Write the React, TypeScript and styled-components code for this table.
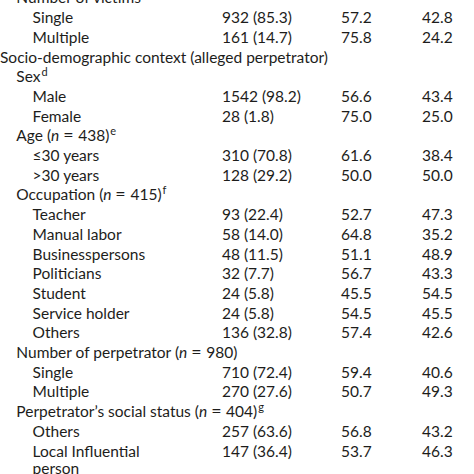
import React from 'react';
import styled, { createGlobalStyle } from 'styled-components';

const GlobalStyle = createGlobalStyle`
  html, body {
    margin: 0;
    padding: 0;
    background: #fff;
  }
  body {
    overflow: hidden;
    font-family: Lato, 'Open Sans', sans-serif;
  }
`;

const Page = styled.div`
  width: 474px;
  height: 474px;
  overflow: hidden;
  background: #fff;
`;

const Table = styled.table`
  margin-top: -11.6px;
  width: 474px;
  table-layout: fixed;
  border-collapse: collapse;
  color: #1d1d1b;
  font-size: 15.5px;
  line-height: 17.7px;
`;

const Label = styled.td<{ $level: number }>`
  padding: 1px 40px 1px ${p => p.$level * 16.3}px;
  vertical-align: top;
  white-space: normal;
`;

const Heading = styled.td<{ $level: number }>`
  padding: 1px 0 1px ${p => p.$level * 16.3}px;
  white-space: nowrap;
`;

const Num = styled.td`
  padding: 1px 0;
  vertical-align: top;
  white-space: nowrap;
`;

const Sup = styled.sup`
  font-size: 11px;
  line-height: 0;
  vertical-align: 6px;
  margin-left: 1px;
`;

const Eq = styled.span`
  display: inline-block;
  margin: 0 1px;
  transform: scaleX(1.15);
`;

type Row =
  | { kind: 'head'; level: number; text: React.ReactNode }
  | { kind: 'data'; level: number; text: string; n: string; a: string; b: string };

const Count = ({ v }: { v: number }) => (
  <>
    (<i>n</i> <Eq>=</Eq> {v})
  </>
);

const rows: Row[] = [
  { kind: 'head', level: 1, text: 'Number of victims' },
  { kind: 'data', level: 2, text: 'Single', n: '932 (85.3)', a: '57.2', b: '42.8' },
  { kind: 'data', level: 2, text: 'Multiple', n: '161 (14.7)', a: '75.8', b: '24.2' },
  { kind: 'head', level: 0, text: 'Socio-demographic context (alleged perpetrator)' },
  { kind: 'head', level: 1, text: <>Sex<Sup>d</Sup></> },
  { kind: 'data', level: 2, text: 'Male', n: '1542 (98.2)', a: '56.6', b: '43.4' },
  { kind: 'data', level: 2, text: 'Female', n: '28 (1.8)', a: '75.0', b: '25.0' },
  { kind: 'head', level: 1, text: <>Age <Count v={438} /><Sup>e</Sup></> },
  { kind: 'data', level: 2, text: '≤30 years', n: '310 (70.8)', a: '61.6', b: '38.4' },
  { kind: 'data', level: 2, text: '>30 years', n: '128 (29.2)', a: '50.0', b: '50.0' },
  { kind: 'head', level: 1, text: <>Occupation <Count v={415} /><Sup>f</Sup></> },
  { kind: 'data', level: 2, text: 'Teacher', n: '93 (22.4)', a: '52.7', b: '47.3' },
  { kind: 'data', level: 2, text: 'Manual labor', n: '58 (14.0)', a: '64.8', b: '35.2' },
  { kind: 'data', level: 2, text: 'Businesspersons', n: '48 (11.5)', a: '51.1', b: '48.9' },
  { kind: 'data', level: 2, text: 'Politicians', n: '32 (7.7)', a: '56.7', b: '43.3' },
  { kind: 'data', level: 2, text: 'Student', n: '24 (5.8)', a: '45.5', b: '54.5' },
  { kind: 'data', level: 2, text: 'Service holder', n: '24 (5.8)', a: '54.5', b: '45.5' },
  { kind: 'data', level: 2, text: 'Others', n: '136 (32.8)', a: '57.4', b: '42.6' },
  { kind: 'head', level: 1, text: <>Number of perpetrator <Count v={980} /></> },
  { kind: 'data', level: 2, text: 'Single', n: '710 (72.4)', a: '59.4', b: '40.6' },
  { kind: 'data', level: 2, text: 'Multiple', n: '270 (27.6)', a: '50.7', b: '49.3' },
  { kind: 'head', level: 1, text: <>Perpetrator’s social status <Count v={404} /><Sup>g</Sup></> },
  { kind: 'data', level: 2, text: 'Others', n: '257 (63.6)', a: '56.8', b: '43.2' },
  { kind: 'data', level: 2, text: 'Local Influential person', n: '147 (36.4)', a: '53.7', b: '46.3' },
];

export default function App() {
  return (
    <Page>
      <GlobalStyle />
      <Table>
        <colgroup>
          <col style={{ width: 222 }} />
          <col style={{ width: 119 }} />
          <col style={{ width: 81 }} />
          <col />
        </colgroup>
        <tbody>
          {rows.map((r, i) =>
            r.kind === 'head' ? (
              <tr key={i}>
                <Heading $level={r.level} colSpan={4}>{r.text}</Heading>
              </tr>
            ) : (
              <tr key={i}>
                <Label $level={r.level}>{r.text}</Label>
                <Num>{r.n}</Num>
                <Num>{r.a}</Num>
                <Num>{r.b}</Num>
              </tr>
            )
          )}
        </tbody>
      </Table>
    </Page>
  );
}
